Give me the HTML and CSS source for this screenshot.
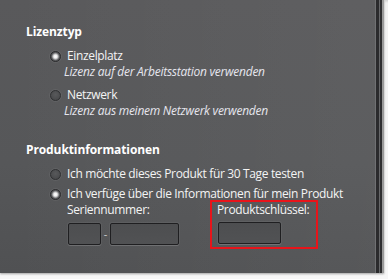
FILE: index.html
```html
<!DOCTYPE html>
<html lang="de">
<head>
<meta charset="utf-8">
<title>Lizenz</title>
<link rel="stylesheet" href="styles.css">
</head>
<body>
<div class="window">
  <div class="panel">
    <h2 class="heading first">Lizenztyp</h2>
    <div class="option">
      <span class="radio checked"></span>
      <span class="label">Einzelplatz</span>
    </div>
    <div class="hint">Lizenz auf der Arbeitsstation verwenden</div>
    <div class="option second">
      <span class="radio"></span>
      <span class="label">Netzwerk</span>
    </div>
    <div class="hint">Lizenz aus meinem Netzwerk verwenden</div>

    <h2 class="heading section">Produktinformationen</h2>
    <div class="option trial">
      <span class="radio"></span>
      <span class="label">Ich möchte dieses Produkt für 30 Tage testen</span>
    </div>
    <div class="option owned">
      <span class="radio checked"></span>
      <span class="label">Ich verfüge über die Informationen für mein Produkt</span>
    </div>
    <div class="fields">
      <div class="group serial">
        <div class="field-label">Seriennummer:</div>
        <div class="inputs">
          <span class="box short"></span>
          <span class="dash">-</span>
          <span class="box long"></span>
        </div>
      </div>
      <div class="group key">
        <div class="field-label">Produktschlüssel:</div>
        <div class="inputs">
          <span class="box keybox"></span>
        </div>
      </div>
    </div>
  </div>
  <div class="edge"></div>
</div>
</body>
</html>
```
FILE: styles.css
```css
html, body {
  margin: 0;
  padding: 0;
}
body {
  width: 388px;
  height: 279px;
  background: linear-gradient(#d4d4d4, #f2f2f2 3px, #f7f7f7);
  font-family: "Open Sans", "Noto Sans", sans-serif;
  overflow: hidden;
}
.window {
  display: flex;
  height: 273px;
  width: 384px;
  box-shadow: 0 1px 2px rgba(0,0,0,0.35);
}
.panel {
  width: 375px;
  box-sizing: border-box;
  padding: 24px 0 0 26px;
  background:
    linear-gradient(90deg, rgba(255,255,255,0) 0%, rgba(255,255,255,0.04) 100%),
    linear-gradient(180deg, #59595b 0%, #565759 60%, #505153 100%);
  color: #f2f2f2;
}
.edge {
  width: 9px;
  background: linear-gradient(90deg,
    #707173 0, #707173 1px,
    #2b2b2d 1px, #2b2b2d 4px,
    #666769 4px, #666769 5px,
    #2f2f31 5px, #2f2f31 7px,
    #9a9a9a 7px, #9a9a9a 9px);
}
.heading {
  margin: 0;
  font-size: 12px;
  font-weight: 700;
  line-height: 16px;
  color: #ffffff;
  letter-spacing: -0.1px;
}
.section {
  margin-top: 23px;
}
.option {
  display: flex;
  align-items: center;
  margin-left: 24px;
  margin-top: 8px;
  height: 16px;
}
.option.second {
  margin-top: 7px;
}
.option.trial {
  margin-top: 8px;
}
.option.owned {
  margin-top: 4px;
}
.radio {
  width: 11px;
  height: 11px;
  box-sizing: border-box;
  border-radius: 50%;
  border: 1px solid #303133;
  background: radial-gradient(circle at 50% 40%, #58595b 0%, #4a4b4d 70%, #404143 100%);
  box-shadow: 0 0 0 1px rgba(255,255,255,0.06);
  margin-right: 6px;
  flex: none;
}
.radio.checked {
  border-color: #2c2c2e;
  background: radial-gradient(circle, #ffffff 0, #f0f0f0 1.6px, #a8a8aa 2.8px, #5c5d5f 3.8px, #48494b 100%);
}
.label {
  font-size: 12px;
  line-height: 16px;
  color: #f4f4f4;
  letter-spacing: -0.35px;
  white-space: nowrap;
}
.hint {
  margin-left: 38px;
  font-size: 12px;
  line-height: 16px;
  font-style: italic;
  color: #e6e6ee;
  letter-spacing: -0.25px;
}
.fields {
  display: flex;
  align-items: flex-start;
  margin-left: 41px;
  margin-top: 0;
}
.group {
  display: flex;
  flex-direction: column;
}
.field-label {
  font-size: 12px;
  line-height: 16px;
  color: #f4f4f4;
  letter-spacing: -0.35px;
  white-space: nowrap;
}
.inputs {
  display: flex;
  align-items: center;
  margin-top: 5px;
}
.serial .inputs {
  margin-left: 1px;
}
.box {
  display: block;
  height: 22px;
  box-sizing: border-box;
  border: 1px solid #1f1f21;
  border-radius: 2px;
  background: linear-gradient(#4d4e50, #515254);
  box-shadow: 0 1px 0 rgba(255,255,255,0.12), 0 0 0 1px rgba(255,255,255,0.05);
}
.short { width: 33px; }
.long { width: 69px; }
.dash {
  width: 9px;
  text-align: center;
  font-size: 11px;
  line-height: 16px;
  color: #cfcfcf;
}
.key {
  margin-left: 31px;
  margin-top: -2px;
  width: 108px;
  height: 49px;
  box-sizing: border-box;
  border: 2px solid #e8141a;
  padding: 0 0 0 5px;
}
.key .inputs {
  margin-left: 1px;
  margin-top: 4px;
}
.keybox { width: 63px; }
```
